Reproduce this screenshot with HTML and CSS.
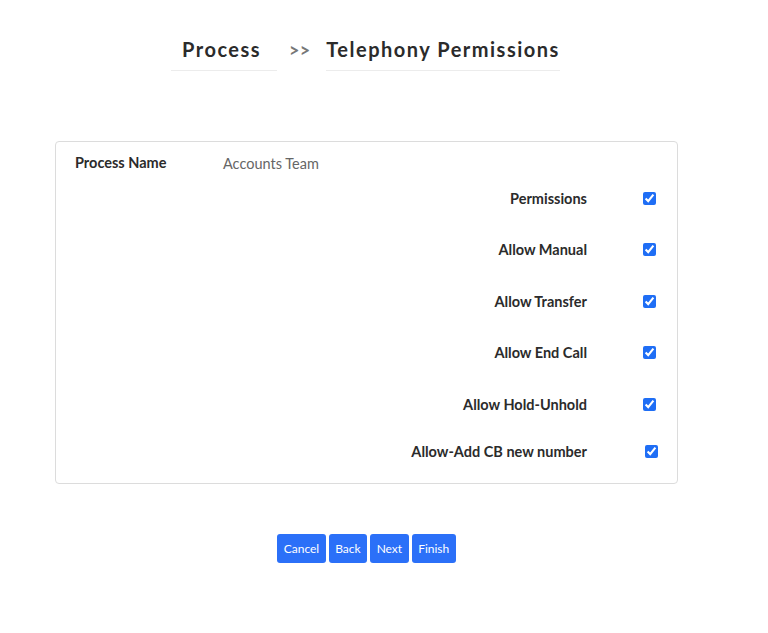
FILE: index.html
```html
<!DOCTYPE html>
<html>
<head>
<meta charset="utf-8">
<link rel="stylesheet" href="styles.css">
</head>
<body>
<div class="page">
  <div class="steps">
    <div class="step step-first">Process</div>
    <div class="sep">&gt;&gt;</div>
    <div class="step step-current">Telephony Permissions</div>
  </div>

  <div class="card">
    <div class="name-row">
      <div class="name-label">Process Name</div>
      <div class="name-value">Accounts Team</div>
    </div>
    <div class="perm-list">
      <label class="perm"><span class="perm-label">Permissions</span><span class="perm-box"><input type="checkbox" checked></span></label>
      <label class="perm"><span class="perm-label">Allow Manual</span><span class="perm-box"><input type="checkbox" checked></span></label>
      <label class="perm"><span class="perm-label">Allow Transfer</span><span class="perm-box"><input type="checkbox" checked></span></label>
      <label class="perm"><span class="perm-label">Allow End Call</span><span class="perm-box"><input type="checkbox" checked></span></label>
      <label class="perm"><span class="perm-label">Allow Hold-Unhold</span><span class="perm-box"><input type="checkbox" checked></span></label>
      <label class="perm perm-last"><span class="perm-label">Allow-Add CB new number</span><span class="perm-box"><input type="checkbox" checked></span></label>
    </div>
  </div>

  <div class="actions">
    <button class="btn">Cancel</button>
    <button class="btn">Back</button>
    <button class="btn">Next</button>
    <button class="btn">Finish</button>
  </div>
</div>
</body>
</html>
```

FILE: styles.css
```css
html, body {
  margin: 0;
  padding: 0;
  background: #ffffff;
}
body {
  font-family: Lato, "Open Sans", "Liberation Sans", sans-serif;
  color: #333;
}
.page {
  width: 768px;
  padding-top: 36px;
}
.steps {
  display: flex;
  justify-content: flex-start;
  align-items: flex-start;
  padding-left: 171px;
}
.step {
  font-size: 20px;
  font-weight: 700;
  letter-spacing: 1.5px;
  color: #2b2b2b;
  padding: 0 0 8px;
  border-bottom: 1px solid #ececec;
  line-height: 26px;
  box-sizing: border-box;
  white-space: nowrap;
}
.step-first {
  width: 106px;
  padding-left: 11px;
}
.step-current {
  width: 234px;
}
.sep {
  font-size: 18px;
  font-weight: 700;
  color: #777;
  line-height: 26px;
  padding: 1px 16px 0 12px;
  letter-spacing: 0.2px;
}
.card {
  margin: 70px 0 0 55px;
  width: 621px;
  height: 341px;
  border: 1px solid #dcdcdc;
  border-radius: 4px;
}
.name-row {
  display: flex;
  padding: 12px 0 0 19px;
  font-size: 14.5px;
  line-height: 18px;
}
.name-label {
  width: 148px;
  font-weight: 700;
  color: #2b2b2b;
}
.name-value {
  color: #666;
  padding-top: 1px;
}
.perm-list {
  display: flex;
  flex-direction: column;
  padding-top: 17px;
}
.perm {
  display: flex;
  align-items: center;
  height: 17px;
}
.perm + .perm {
  margin-top: 34.4px;
}
.perm-label {
  width: 531px;
  text-align: right;
  font-size: 14.5px;
  font-weight: 700;
  color: #2b2b2b;
}
.perm-box {
  width: 90px;
  display: flex;
  justify-content: flex-start;
  padding-left: 56px;
  box-sizing: border-box;
}
.perm.perm-last {
  margin-top: 30px;
}
.perm-last .perm-box {
  padding-left: 58px;
}
.perm-box input {
  margin: 0;
  width: 13px;
  height: 13px;
  accent-color: #1f6ef5;
}
.actions {
  display: flex;
  justify-content: center;
  gap: 3px;
  margin-top: 50px;
  padding-right: 35px;
}
.btn {
  font-family: Lato, "Open Sans", "Liberation Sans", sans-serif;
  font-size: 12px;
  color: #fff;
  background: #2b70f8;
  border: none;
  border-radius: 3px;
  height: 29px;
  padding: 0 6.5px;
}
```
